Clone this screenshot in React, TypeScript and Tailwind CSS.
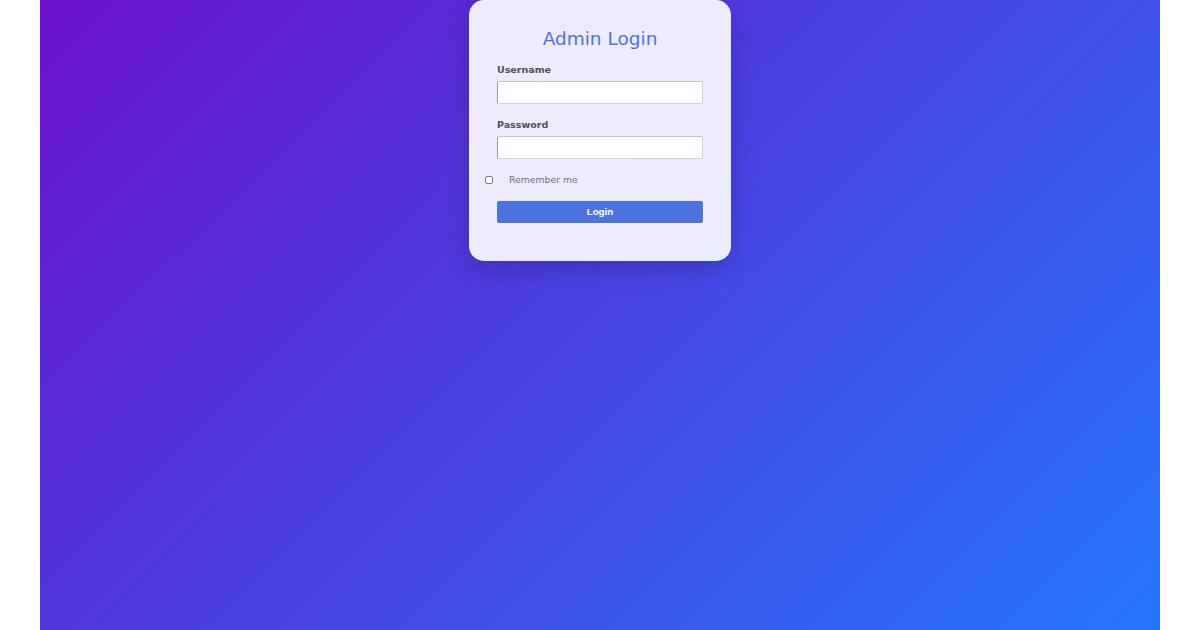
export default function App() {
  return (
    <div className="w-[1200px] h-[630px] bg-white flex justify-center" style={{ fontFamily: "'DejaVu Sans', sans-serif" }}>
      <div className="w-[1120px] h-full bg-[linear-gradient(135deg,#6a11cb,#2575fc)] flex justify-center items-start">
        <div className="w-[262px] h-[261px] bg-white/90 rounded-[15px] shadow-[0_8px_24px_rgba(0,0,0,0.18)] px-7 pt-[27px] flex flex-col">
          <h1 className="text-center text-[18.5px] leading-[24px] text-[#4e73df]">Admin Login</h1>
          <label className="mt-[13px] text-[9.5px] font-bold text-[#4f4f5a] leading-[12px]">Username</label>
          <input className="mt-[5px] h-[23px] w-full bg-white border border-[#d2d2dd] border-l-[#9a9aa5] border-t-[#c2c2cc] rounded-[2px] outline-none" />
          <label className="mt-[15px] text-[9.5px] font-bold text-[#4f4f5a] leading-[12px]">Password</label>
          <input type="password" className="mt-[5px] h-[23px] w-full bg-white border border-[#d2d2dd] border-l-[#9a9aa5] border-t-[#c2c2cc] rounded-[2px] outline-none" />
          <div className="mt-[15px] -ml-[12px] flex items-center h-[12px]">
            <span className="w-[8px] h-[8px] border border-[#7a7a85] rounded-[2px] bg-white" />
            <span className="ml-[16px] text-[9.3px] text-[#6e6e7a]">Remember me</span>
          </div>
          <button
            className="mt-[15px] h-[22px] w-full bg-[#4e73df] rounded-[2px] text-white text-[9.8px] font-bold"
            style={{ fontFamily: "'Liberation Sans', Arial, sans-serif" }}
          >
            Login
          </button>
        </div>
      </div>
    </div>
  );
}
